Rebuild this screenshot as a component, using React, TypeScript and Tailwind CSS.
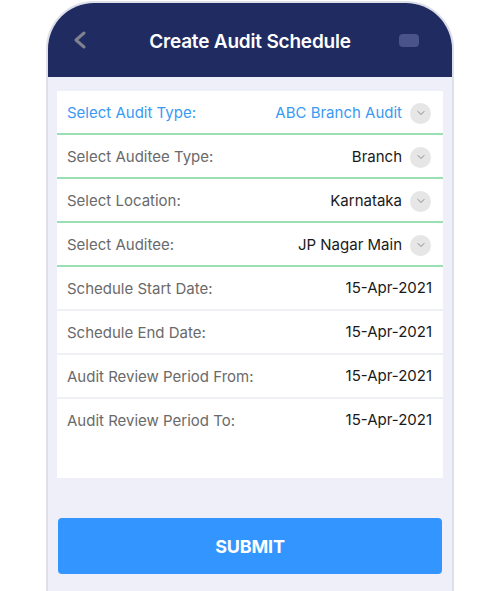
import { ChevronDown } from 'lucide-react';

// Dropdown rows carry a green divider, date rows a soft grey one
const SELECT_ROWS = [
  { label: 'Select Audit Type:', value: 'ABC Branch Audit', active: true },
  { label: 'Select Auditee Type:', value: 'Branch', active: false },
  { label: 'Select Location:', value: 'Karnataka', active: false },
  { label: 'Select Auditee:', value: 'JP Nagar Main', active: false },
];

const DATE_ROWS = [
  { label: 'Schedule Start Date:', value: '15-Apr-2021' },
  { label: 'Schedule End Date:', value: '15-Apr-2021' },
  { label: 'Audit Review Period From:', value: '15-Apr-2021' },
  { label: 'Audit Review Period To:', value: '15-Apr-2021' },
];

export default function App() {
  return (
    <div className="w-full h-[591px] bg-white overflow-hidden pt-[1px] font-['Inter',sans-serif]">
      <div className="mx-auto w-[408px] h-[640px] border-2 border-[#dde0e7] rounded-t-[48px] overflow-hidden bg-[#eeeff8]">
        {/* Header */}
        <div className="h-[74px] bg-[#202b62] flex items-center">
          <div className="w-[60px] pl-[24px] flex items-center">
            <svg width="16" height="18" viewBox="0 0 16 18" fill="none">
              <path d="M12 2 L4 9 L12 16" stroke="#7f828e" strokeWidth="3" strokeLinecap="round" strokeLinejoin="round" />
            </svg>
          </div>
          <h1 className="flex-1 text-center text-white text-[19px] font-semibold tracking-[-0.2px] pt-[5px]">
            Create Audit Schedule
          </h1>
          <div className="w-[60px] pr-[33px] flex justify-end">
            <div className="w-[20px] h-[13px] rounded-[4px] bg-[#4b5488]" />
          </div>
        </div>

        {/* Form card */}
        <div className="mx-[9px] mt-[14px] bg-white h-[387px]">
          {SELECT_ROWS.map((row) => (
            <div key={row.label}>
              <div className="h-[42px] flex items-center pl-[10px] pr-[12px] text-[15px] pt-[2px]">
                <span className={`flex-1 ${row.active ? 'text-[#3a9af3]' : 'text-[#6a6a6a]'}`}>
                  {row.label}
                </span>
                <span className={row.active ? 'text-[#3a9af3]' : 'text-[#1a1a1a]'}>{row.value}</span>
                <span className="ml-[8px] w-[21px] h-[21px] rounded-full bg-[#e6e6e6] flex items-center justify-center">
                  <ChevronDown className="w-3 h-3 text-[#888]" strokeWidth={2} />
                </span>
              </div>
              <div className="h-[2px] bg-[#9be0b3]" />
            </div>
          ))}
          {DATE_ROWS.map((row, i) => (
            <div key={row.label}>
              <div className="h-[42px] flex items-center pl-[10px] pr-[11px] text-[15px]">
                <span className="flex-1 text-[#6a6a6a] pt-[2px]">{row.label}</span>
                <span className="text-[#1a1a1a]">{row.value}</span>
              </div>
              {i < DATE_ROWS.length - 1 && <div className="h-[2px] bg-[#eff0f5]" />}
            </div>
          ))}
        </div>

        {/* Submit */}
        <div className="px-[10px] mt-[40px]">
          <button className="w-full h-[56px] rounded-[4px] bg-[#3395ff] text-white text-[18px] font-bold tracking-[-0.2px]">
            SUBMIT
          </button>
        </div>
      </div>
    </div>
  );
}
